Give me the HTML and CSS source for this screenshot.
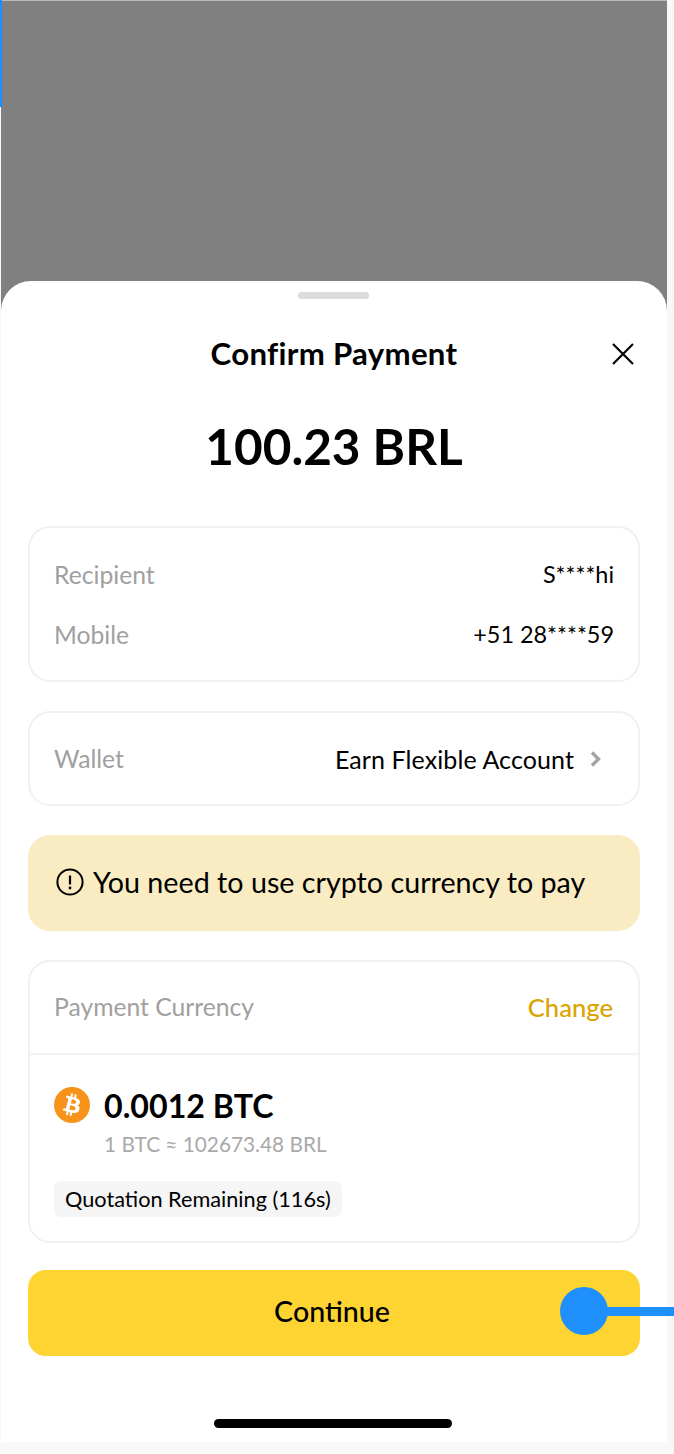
FILE: index.html
```html
<!DOCTYPE html>
<html lang="en">
<head>
  <meta charset="UTF-8" />
  <meta name="viewport" content="width=device-width, initial-scale=1.0"/>
  <title>Confirm Payment</title>
  <link rel="stylesheet" href="styles.css">
</head>
<body>
  <div class="screen">
    <div class="backdrop"></div>
    <div class="sheet">
      <div class="handle"></div>
      <div class="sheet-head">
        <span></span>
        <h2>Confirm Payment</h2>
        <button class="close" aria-label="Close">
          <svg width="24" height="24" viewBox="0 0 24 24" fill="none" stroke="#000" stroke-width="2.2"><path d="M2 2l20 20M22 2L2 22"/></svg>
        </button>
      </div>
      <div class="amount">100.23 BRL</div>

      <div class="card card-info">
        <div class="row"><span class="label">Recipient</span><span class="value">S****hi</span></div>
        <div class="row"><span class="label">Mobile</span><span class="value">+51 28****59</span></div>
      </div>

      <div class="card card-wallet">
        <span class="label">Wallet</span>
        <span class="wallet-pick">
          <span class="value">Earn Flexible Account</span>
          <svg width="12" height="16" viewBox="0 0 12 16" fill="none" stroke="#a3a3a3" stroke-width="3.4"><path d="M2 1.5L8.5 8 2 14.5"/></svg>
        </span>
      </div>

      <div class="notice">
        <svg width="28" height="28" viewBox="0 0 28 28" fill="none"><circle cx="14" cy="14" r="12.6" stroke="#000" stroke-width="2"/><path d="M14 7.5v9" stroke="#000" stroke-width="2.2"/><circle cx="14" cy="20" r="1.4" fill="#000"/></svg>
        <span>You need to use crypto currency to pay</span>
      </div>

      <div class="card card-pay">
        <div class="pay-head">
          <span class="label">Payment Currency</span>
          <span class="change">Change</span>
        </div>
        <div class="pay-body">
          <div class="coin-row">
            <svg class="coin" width="36" height="36" viewBox="0 0 24 24"><circle cx="12" cy="12" r="12" fill="#f7931a"/><path fill="#fff" d="M17.288 10.291c.24-1.59-.974-2.45-2.64-3.03l.54-2.153-1.315-.33-.525 2.107c-.345-.087-.705-.167-1.064-.25l.526-2.127-1.32-.33-.54 2.165c-.285-.067-.565-.132-.84-.2l-1.815-.45-.35 1.407s.975.225.955.236c.535.136.63.486.615.766l-1.477 5.92c-.075.166-.24.406-.614.314.015.02-.96-.24-.96-.24l-.66 1.51 1.71.426.93.242-.54 2.19 1.32.327.54-2.17c.36.1.705.19 1.05.273l-.51 2.154 1.32.33.545-2.19c2.24.427 3.93.257 4.64-1.774.57-1.637-.03-2.58-1.217-3.196.854-.193 1.5-.76 1.68-1.93h.01zm-3.01 4.22c-.404 1.64-3.157.75-4.05.53l.72-2.9c.896.23 3.757.67 3.33 2.37zm.41-4.24c-.37 1.49-2.662.735-3.405.55l.654-2.64c.744.18 3.137.524 2.75 2.084v.006z"/></svg>
            <span class="coin-amount">0.0012 BTC</span>
          </div>
          <div class="rate">1 BTC ≈ 102673.48 BRL</div>
          <span class="quote">Quotation Remaining (116s)</span>
        </div>
      </div>

      <button class="continue">Continue</button>
      <div class="home-bar"></div>
    </div>
  </div>

  <!-- annotation marks drawn over the screenshot -->
  <div class="edge-mark"></div>
  <div class="tap-dot"></div>
  <div class="tap-line"></div>
</body>
</html>
```

FILE: styles.css
```css
html, body {
  margin: 0;
  height: 1454px;
  overflow: hidden;
}
body {
  font-family: Lato, 'Noto Sans', sans-serif;
  background-color: #f8f8f8;
  color: #000;
  position: relative;
}
.screen {
  width: 666px;
  margin-left: 1px;
  background: #808080;
  border-top: 1px solid #bbb;
}
.backdrop {
  height: 280px;
}
.sheet {
  height: 1161px;
  box-sizing: border-box;
  padding: 11px 27px 0;
  background: #fff;
  border-radius: 30px 30px 0 0;
}
.handle {
  width: 71px;
  height: 7px;
  margin-left: 270px;
  border-radius: 4px;
  background: #dcdcdc;
}
.sheet-head {
  display: grid;
  grid-template-columns: 1fr auto 1fr;
  align-items: center;
  height: 44px;
  margin-top: 33px;
}
.sheet-head h2 {
  margin: 0 0 2px;
  font-size: 31.2px;
  font-weight: 700;
  letter-spacing: 0.3px;
}
.close {
  justify-self: end;
  display: flex;
  padding: 0;
  margin-right: 5px;
  border: none;
  background: none;
}
.amount {
  margin-top: 40px;
  height: 62px;
  line-height: 60px;
  text-align: center;
  font-size: 49.5px;
  font-weight: 700;
}
.card {
  box-sizing: border-box;
  border: 2px solid #f0f0f0;
  border-radius: 22px;
}
.label {
  font-size: 24.7px;
  color: #a0a0a0;
}
.value {
  font-size: 25px;
  letter-spacing: 0.1px;
}
.card-info {
  height: 156px;
  margin-top: 48px;
  padding: 16px 24px;
}
.row {
  display: flex;
  justify-content: space-between;
  align-items: center;
  height: 60px;
}
.row .value {
  font-size: 23.4px;
  letter-spacing: 0;
}
.card-wallet {
  display: flex;
  justify-content: space-between;
  align-items: center;
  height: 95px;
  margin-top: 29px;
  padding: 0 36px 0 24px;
}
.wallet-pick {
  display: flex;
  align-items: center;
  gap: 16px;
}
.notice {
  display: flex;
  align-items: center;
  gap: 9px;
  height: 96px;
  margin-top: 29px;
  padding: 0 0 2px 28px;
  box-sizing: border-box;
  border-radius: 22px;
  background: #f9ecc2;
  font-size: 28.7px;
}
.card-pay {
  height: 283px;
  margin-top: 29px;
}
.pay-head {
  display: flex;
  justify-content: space-between;
  align-items: center;
  height: 93px;
  padding: 0 25px 2px 24px;
  box-sizing: border-box;
  border-bottom: 2px solid #f3f3f3;
}
.change {
  font-size: 25.6px;
  font-weight: 500;
  color: #dba400;
}
.pay-body {
  padding: 30px 24px 0;
}
.coin-row {
  display: flex;
  align-items: center;
  gap: 14px;
  height: 40px;
}
.coin-amount {
  font-size: 32.2px;
  font-weight: 700;
}
.rate {
  margin: 5px 0 0 50px;
  font-size: 20.8px;
  line-height: 28px;
  color: #a9a9a9;
}
.quote {
  display: inline-block;
  margin-top: 23px;
  padding: 0 11px;
  height: 36px;
  line-height: 36px;
  border-radius: 7px;
  background: #f5f5f5;
  font-size: 21.7px;
}
.continue {
  display: block;
  width: 100%;
  height: 86px;
  margin-top: 27px;
  border: none;
  border-radius: 18px;
  background: #fdd431;
  font-family: inherit;
  font-size: 28.6px;
  font-weight: 500;
  color: #000;
  padding: 0 4px 4px 0;
}
.home-bar {
  width: 238px;
  height: 9px;
  margin: 63px 0 0 186px;
  border-radius: 5px;
  background: #000;
}
.edge-mark {
  position: absolute;
  left: 0;
  top: 0;
  width: 1.5px;
  height: 107px;
  background: #1f8ffb;
}
.tap-dot {
  position: absolute;
  left: 560px;
  top: 1287px;
  width: 48px;
  height: 48px;
  border-radius: 50%;
  background: #1f8ffb;
}
.tap-line {
  position: absolute;
  left: 606px;
  top: 1307px;
  width: 68px;
  height: 9px;
  background: #1f8ffb;
}
```
